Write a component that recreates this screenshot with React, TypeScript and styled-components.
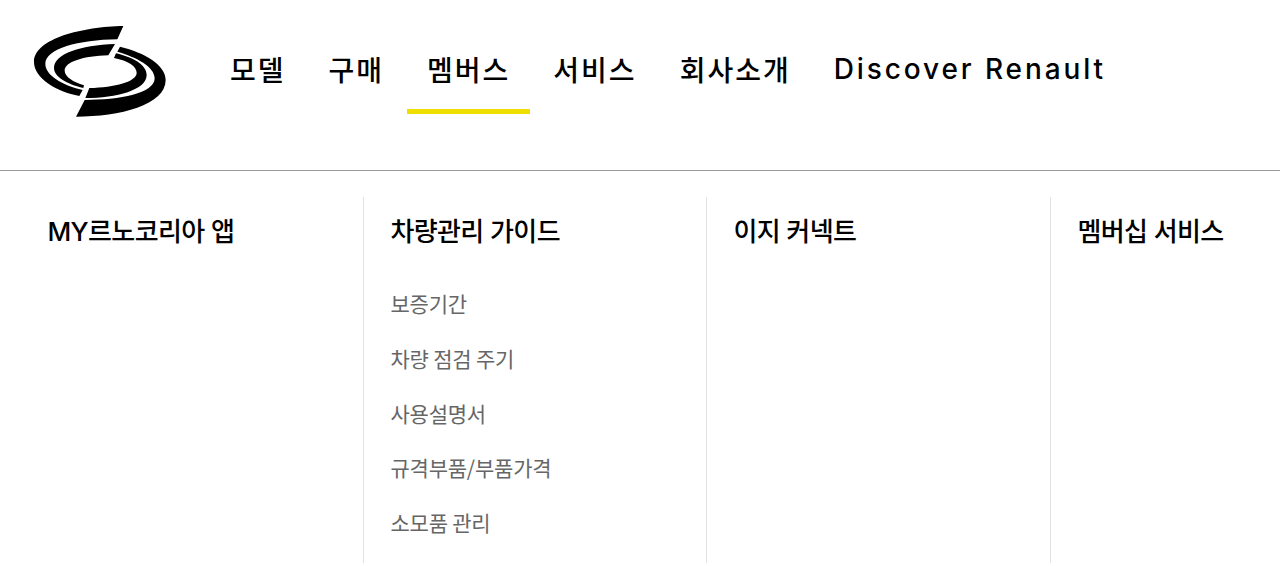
import React from "react";
import styled, { createGlobalStyle } from "styled-components";

const GlobalStyle = createGlobalStyle`
  html, body {
    margin: 0;
    padding: 0;
    background: #fff;
    overflow: hidden;
  }
  body {
    font-family: "Noto Sans CJK KR", "Noto Sans", sans-serif;
  }
`;

const navItems = ["모델", "구매", "멤버스", "서비스", "회사소개", "Discover Renault"];

const columns = [
  { title: "MY르노코리아 앱", links: [] as string[] },
  {
    title: "차량관리 가이드",
    links: ["보증기간", "차량 점검 주기", "사용설명서", "규격부품/부품가격", "소모품 관리"],
  },
  { title: "이지 커넥트", links: [] as string[] },
  { title: "멤버십 서비스", links: [] as string[] },
];

const Logo = () => (
  <LogoSvg viewBox="0 0 510 360" aria-label="logo">
    <path d="M310 48 C190 50 42 85 42 156 C42 205 110 245 178 258 L188 240 C125 225 76 195 76 162 C76 116 175 90 292 88 Z" />
    <path d="M285 102 C180 106 102 132 102 174 C102 200 140 222 190 234 L192 226 C160 216 134 200 134 182 C134 156 190 138 265 136 Z" />
    <path d="M168 320 C300 320 437 285 437 210 C437 165 375 128 300 110 L292 125 C350 142 404 170 404 205 C404 250 300 270 194 270 Z" />
    <path d="M288 130 L282 144 C325 152 350 170 350 188 C350 215 285 232 208 234 L196 264 C290 264 380 240 380 195 C380 165 340 142 288 130 Z" />
  </LogoSvg>
);

export default function App() {
  return (
    <Page>
      <GlobalStyle />
      <Header>
        <Logo />
        <Nav>
          {navItems.map((item) => (
            <NavItem key={item} $active={item === "멤버스"} $latin={item.startsWith("Discover")}>
              {item}
            </NavItem>
          ))}
        </Nav>
      </Header>
      <Columns>
        {columns.map((col) => (
          <Column key={col.title}>
            <ColumnTitle>{col.title}</ColumnTitle>
            {col.links.length > 0 && (
              <LinkList>
                {col.links.map((link) => (
                  <LinkItem key={link}>{link}</LinkItem>
                ))}
              </LinkList>
            )}
          </Column>
        ))}
      </Columns>
    </Page>
  );
}

const Page = styled.div`
  width: 1280px;
  height: 566px;
  background: #fff;
  overflow: hidden;
`;

const Header = styled.header`
  height: 170px;
  display: flex;
  align-items: flex-start;
  border-bottom: 1px solid #999;
  padding-left: 20px;
`;

const LogoSvg = styled.svg`
  width: 170px;
  height: 120px;
  margin-top: 10px;
  flex: none;
  fill: #000;
`;

const Nav = styled.nav`
  display: flex;
  gap: 3px;
  margin-left: 20px;
`;

const NavItem = styled.a<{ $active?: boolean; $latin?: boolean }>`
  display: block;
  height: 114px;
  box-sizing: border-box;
  padding: 0 20px;
  line-height: 139px;
  font-size: 28px;
  font-weight: 500;
  color: #000;
  white-space: nowrap;
  letter-spacing: ${(p) => (p.$latin ? "2.9px" : "2px")};
  font-family: ${(p) => (p.$latin ? '"Inter", "Noto Sans", sans-serif' : '"Noto Sans CJK KR", sans-serif')};
  border-bottom: 5px solid ${(p) => (p.$active ? "#efdf00" : "transparent")};
`;

const Columns = styled.div`
  display: grid;
  grid-template-columns: 343px 343px 344px 1fr;
  margin: 26px 0 0 20px;
  height: 366px;
`;

const Column = styled.section`
  padding: 15px 0 0 26.4px;
  border-left: 1px solid #e3e3e3;
  box-sizing: border-box;

  &:first-child {
    border-left-color: transparent;
  }
`;

const ColumnTitle = styled.h3`
  margin: 0;
  font-family: "Inter", "Noto Sans CJK KR", sans-serif;
  font-size: 26px;
  line-height: 40px;
  font-weight: 500;
  color: #000;
  letter-spacing: -0.6px;
  white-space: nowrap;
`;

const LinkList = styled.ul`
  list-style: none;
  margin: 24px 0 0;
  padding: 0;
`;

const LinkItem = styled.li`
  font-size: 21px;
  line-height: 54.8px;
  color: #666;
  letter-spacing: -0.2px;
  white-space: nowrap;
`;
